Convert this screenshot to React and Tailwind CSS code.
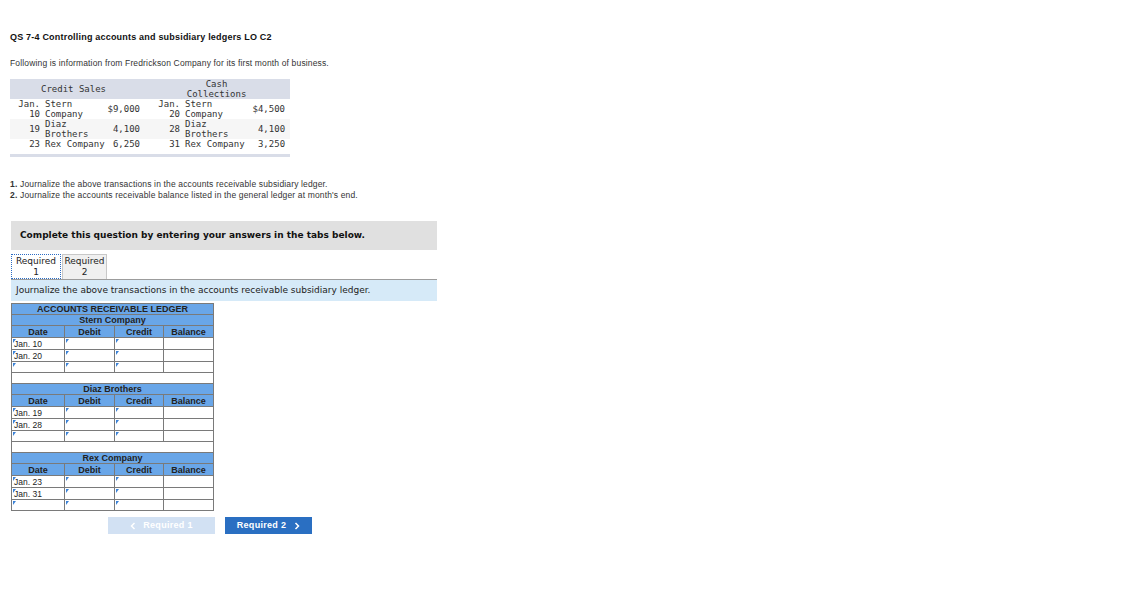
import React from "react";

const sales = [
  { d1: "Jan. 10", n1: "Stern Company", a1: "$9,000", d2: "Jan. 20", n2: "Stern Company", a2: "$4,500", shade: false },
  { d1: "19", n1: "Diaz Brothers", a1: "4,100", d2: "28", n2: "Diaz Brothers", a2: "4,100", shade: true },
  { d1: "23", n1: "Rex Company", a1: "6,250", d2: "31", n2: "Rex Company", a2: "3,250", shade: false },
];

const ledgers = [
  { name: "Stern Company", dates: ["Jan. 10", "Jan. 20", ""] },
  { name: "Diaz Brothers", dates: ["Jan. 19", "Jan. 28", ""] },
  { name: "Rex Company", dates: ["Jan. 23", "Jan. 31", ""] },
];

function Flag() {
  return <span className="absolute left-[1px] top-[1px] w-0 h-0 border-t-[4px] border-t-[#3b82d6] border-r-[3px] border-r-transparent" />;
}

function InputCell({ children, flag = true, h }) {
  return (
    <td className={`relative border border-[#7a7a7a] p-0 pl-[2px] text-left align-middle bg-white ${h}`}>
      {flag && <Flag />}
      {children}
    </td>
  );
}

function Ledger({ ledger, last }) {
  return (
    <>
      <tr className="bg-[#69a6e8]">
        <td colSpan={4} className="border border-[#7a7a7a] h-[11px] p-0 text-center font-bold text-[9px] leading-[10px] text-[#222]">
          {ledger.name}
        </td>
      </tr>
      <tr className="bg-[#69a6e8]">
        {["Date", "Debit", "Credit", "Balance"].map((h) => (
          <td key={h} className="border border-[#7a7a7a] h-[12px] p-0 text-center font-bold text-[9px] leading-[10px] text-[#222]">
            {h}
          </td>
        ))}
      </tr>
      {ledger.dates.map((d, i) => {
        const h = i === 2 ? "h-[11px]" : "h-[12px]";
        return (
          <tr key={i}>
            <InputCell h={h}>{d}</InputCell>
            <InputCell h={h} />
            <InputCell h={h} />
            <InputCell h={h} flag={false} />
          </tr>
        );
      })}
      {!last && (
        <tr>
          <td colSpan={4} className="border border-[#7a7a7a] h-[11px] p-0 bg-white" />
        </tr>
      )}
    </>
  );
}

export default function App() {
  return (
    <div className="w-[1131px] h-[616px] bg-white pl-[10px] pt-[31px] text-[#222]" style={{ fontFamily: "'Liberation Sans', Arial, sans-serif" }}>
      <h1 className="font-bold text-[9px] tracking-[0.2px] leading-[12px] text-[#111]">QS 7-4 Controlling accounts and subsidiary ledgers LO C2</h1>
      <p className="mt-[14px] text-[8.5px] tracking-[0.15px] leading-[12px] text-[#333]">Following is information from Fredrickson Company for its first month of business.</p>

      {/* sales / collections */}
      <div className="mt-[10px] w-[280px] border-b-[3px] border-[#d9dde8] pb-[5px]" style={{ fontFamily: "'DejaVu Sans Mono', monospace" }}>
        <table className="border-collapse text-[9px] leading-[10px] text-[#333] table-fixed w-[280px]">
          <colgroup>
            <col className="w-[33px]" />
            <col className="w-[64px]" />
            <col className="w-[36px]" />
            <col className="w-[40px]" />
            <col className="w-[65px]" />
            <col className="w-[42px]" />
          </colgroup>
          <thead>
            <tr className="bg-[#d9dde8] h-[20px]">
              <th colSpan={3} className="font-normal text-center align-middle p-0 pr-[6px]">Credit Sales</th>
              <th colSpan={3} className="font-normal text-center align-middle p-0">Cash<br />Collections</th>
            </tr>
          </thead>
          <tbody>
            {sales.map((r, i) => (
              <tr key={i} className={r.shade ? "bg-[#f6f6f6]" : ""}>
                <td className="text-right align-middle p-0 pr-[3px]">{r.d1}</td>
                <td className="text-left align-middle p-0 pl-[2px]">{r.n1}</td>
                <td className="text-right align-middle p-0 pr-[3px]">{r.a1}</td>
                <td className="text-right align-middle p-0 pr-[3px]">{r.d2}</td>
                <td className="text-left align-middle p-0 pl-[2px]">{r.n2}</td>
                <td className="text-right align-middle p-0 pr-[5px]">{r.a2}</td>
              </tr>
            ))}
          </tbody>
        </table>
      </div>

      <ol className="mt-[22px] text-[8.5px] tracking-[0.15px] leading-[11px] text-[#333]">
        <li className="flex"><span className="w-[10px] font-bold">1.</span>Journalize the above transactions in the accounts receivable subsidiary ledger.</li>
        <li className="flex"><span className="w-[10px] font-bold">2.</span>Journalize the accounts receivable balance listed in the general ledger at month's end.</li>
      </ol>

      <div className="ml-[1px] w-[426px]" style={{ fontFamily: "'DejaVu Sans', Verdana, sans-serif" }}>
        <div className="mt-[20px] h-[29px] bg-[#e0e0e0] flex items-center pl-[9px] font-bold text-[9px] text-[#111]">
          Complete this question by entering your answers in the tabs below.
        </div>

        <div className="mt-[4px] flex items-end border-b border-[#9c9c9c]">
          <div className="w-[50px] h-[25px] bg-white border border-dotted border-[#2b6cc4] flex flex-col items-center justify-center text-[9px] leading-[11px] text-[#222]">
            <span>Required</span>
            <span>1</span>
          </div>
          <div className="ml-[1px] w-[45px] h-[25px] bg-[#f0f0f0] border border-b-0 border-[#c8c8c8] flex flex-col items-center justify-center text-[9px] leading-[11px] text-[#222]">
            <span>Required</span>
            <span>2</span>
          </div>
        </div>
        <div className="h-[21px] bg-[#d6eaf8] flex items-center pl-[5px] text-[9px] text-[#222]">
          Journalize the above transactions in the accounts receivable subsidiary ledger.
        </div>
      </div>

      <table className="mt-[2px] ml-[1px] border-collapse table-fixed w-[202px] text-[8.5px] leading-[10px] text-[#222]">
        <colgroup>
          <col className="w-[53px]" />
          <col className="w-[50px]" />
          <col className="w-[49px]" />
          <col className="w-[50px]" />
        </colgroup>
        <tbody>
          <tr className="bg-[#69a6e8]">
            <td colSpan={4} className="border border-[#7a7a7a] h-[11px] p-0 text-center font-bold text-[9px] leading-[10px] text-[#222]">
              ACCOUNTS RECEIVABLE LEDGER
            </td>
          </tr>
          {ledgers.map((l, i) => (
            <Ledger key={l.name} ledger={l} last={i === ledgers.length - 1} />
          ))}
        </tbody>
      </table>

      <div className="mt-[6px] flex gap-[10px] pl-[98px]">
        <div className="w-[107px] h-[17px] bg-[#d2e1f3] flex items-center justify-center gap-[7px] text-white font-bold text-[9px] tracking-[0.3px]">
          <svg width="6" height="8" viewBox="0 0 6 8"><path d="M4.5 1 L1.5 4 L4.5 7" stroke="white" strokeWidth="1.5" fill="none" /></svg>
          <span>Required 1</span>
        </div>
        <div className="w-[87px] h-[17px] bg-[#2a6fc2] flex items-center justify-center gap-[8px] text-white font-bold text-[9px] tracking-[0.3px]">
          <span>Required 2</span>
          <svg width="6" height="8" viewBox="0 0 6 8"><path d="M1.5 1 L4.5 4 L1.5 7" stroke="white" strokeWidth="1.5" fill="none" /></svg>
        </div>
      </div>
    </div>
  );
}
